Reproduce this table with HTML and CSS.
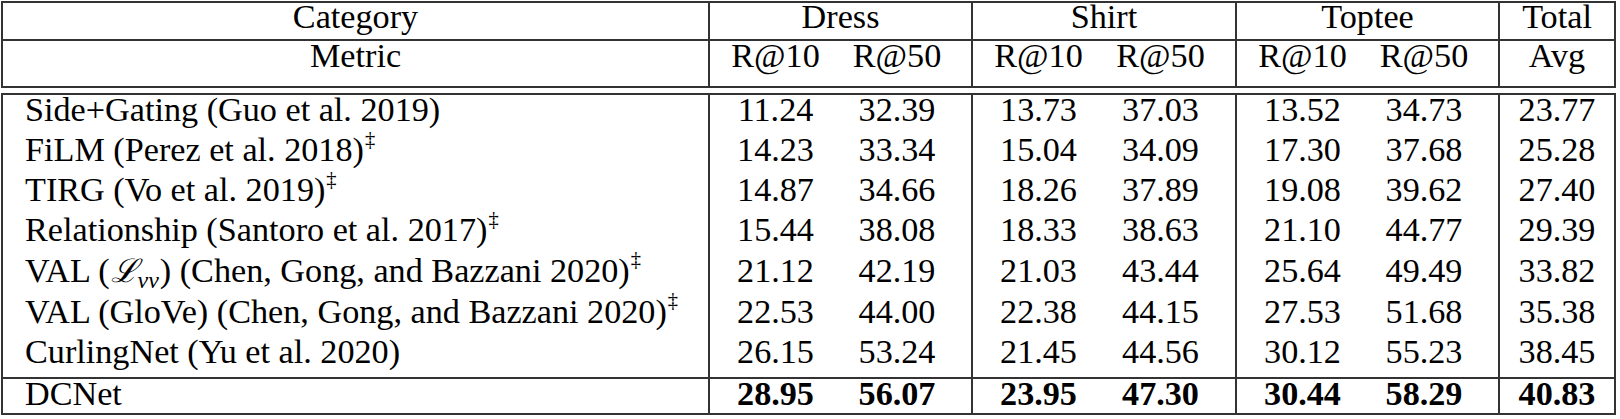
FILE: index.html
```html
<!DOCTYPE html>
<html lang="en">
<head>
<meta charset="utf-8">
<title>Results table</title>
<link rel="stylesheet" href="styles.css">
</head>
<body>
<div class="wrap">
  <table class="tbl head">
    <colgroup>
      <col class="c-name"><col class="c-a"><col class="c-b"><col class="c-a"><col class="c-c"><col class="c-a"><col class="c-b"><col class="c-tot">
    </colgroup>
    <tr class="r1">
      <td class="name ctr">Category</td>
      <td colspan="2" class="num grp">Dress</td>
      <td colspan="2" class="num grp">Shirt</td>
      <td colspan="2" class="num grp">Toptee</td>
      <td class="num">Total</td>
    </tr>
    <tr class="r2">
      <td class="name ctr">Metric</td>
      <td class="num">R@10</td><td class="num end">R@50</td>
      <td class="num">R@10</td><td class="num end">R@50</td>
      <td class="num">R@10</td><td class="num end">R@50</td>
      <td class="num">Avg</td>
    </tr>
  </table>
  <table class="tbl body">
    <colgroup>
      <col class="c-name"><col class="c-a"><col class="c-b"><col class="c-a"><col class="c-c"><col class="c-a"><col class="c-b"><col class="c-tot">
    </colgroup>
    <tr>
      <td class="name">Side+Gating (Guo et al. 2019)</td>
      <td class="num">11.24</td><td class="num end">32.39</td>
      <td class="num">13.73</td><td class="num end">37.03</td>
      <td class="num">13.52</td><td class="num end">34.73</td>
      <td class="num">23.77</td>
    </tr>
    <tr>
      <td class="name">FiLM (Perez et al. 2018)<sup class="dag">‡</sup></td>
      <td class="num">14.23</td><td class="num end">33.34</td>
      <td class="num">15.04</td><td class="num end">34.09</td>
      <td class="num">17.30</td><td class="num end">37.68</td>
      <td class="num">25.28</td>
    </tr>
    <tr>
      <td class="name">TIRG (Vo et al. 2019)<sup class="dag">‡</sup></td>
      <td class="num">14.87</td><td class="num end">34.66</td>
      <td class="num">18.26</td><td class="num end">37.89</td>
      <td class="num">19.08</td><td class="num end">39.62</td>
      <td class="num">27.40</td>
    </tr>
    <tr>
      <td class="name">Relationship (Santoro et al. 2017)<sup class="dag">‡</sup></td>
      <td class="num">15.44</td><td class="num end">38.08</td>
      <td class="num">18.33</td><td class="num end">38.63</td>
      <td class="num">21.10</td><td class="num end">44.77</td>
      <td class="num">29.39</td>
    </tr>
    <tr>
      <td class="name">VAL <span class="math">(<span class="cal">ℒ</span><sub class="sub">vv</sub>)</span> (Chen, Gong, and Bazzani 2020)<sup class="dag">‡</sup></td>
      <td class="num">21.12</td><td class="num end">42.19</td>
      <td class="num">21.03</td><td class="num end">43.44</td>
      <td class="num">25.64</td><td class="num end">49.49</td>
      <td class="num">33.82</td>
    </tr>
    <tr>
      <td class="name">VAL (GloVe) (Chen, Gong, and Bazzani 2020)<sup class="dag">‡</sup></td>
      <td class="num">22.53</td><td class="num end">44.00</td>
      <td class="num">22.38</td><td class="num end">44.15</td>
      <td class="num">27.53</td><td class="num end">51.68</td>
      <td class="num">35.38</td>
    </tr>
    <tr>
      <td class="name">CurlingNet (Yu et al. 2020)</td>
      <td class="num">26.15</td><td class="num end">53.24</td>
      <td class="num">21.45</td><td class="num end">44.56</td>
      <td class="num">30.12</td><td class="num end">55.23</td>
      <td class="num">38.45</td>
    </tr>
    <tr class="best">
      <td class="name">DCNet</td>
      <td class="num">28.95</td><td class="num end">56.07</td>
      <td class="num">23.95</td><td class="num end">47.30</td>
      <td class="num">30.44</td><td class="num end">58.29</td>
      <td class="num">40.83</td>
    </tr>
  </table>
</div>
</body>
</html>
```

FILE: styles.css
```css
html, body {
  margin: 0;
  padding: 0;
  background: #ffffff;
}

.wrap {
  padding: 1px 0 0 1px;
  display: flex;
  flex-direction: column;
  gap: 5px;
  font-family: "Liberation Serif", "Times New Roman", serif;
  font-size: 34.2px;
  color: #000;
}

.tbl {
  width: 1615px;
  table-layout: fixed;
  border-collapse: separate;
  border-spacing: 0;
  border: 2px solid #333;
}

.c-name { width: 707px; }
.c-a { width: 131px; }
.c-b { width: 132px; }
.c-c { width: 133px; }
.c-tot { width: 114px; }

.tbl td {
  box-sizing: border-box;
  padding: 0;
  white-space: nowrap;
  vertical-align: top;
}

.name {
  padding-left: 22px !important;
  text-align: left;
  border-right: 2px solid #333;
}

.name.ctr {
  text-align: center;
  padding-left: 0 !important;
}

.num {
  text-align: center;
}

.grp {
  border-right: 2px solid #333;
}

.end {
  border-right: 2px solid #333;
  padding-right: 18px !important;
}

.head .r1 td {
  line-height: 27px;
  padding-bottom: 8.5px;
  border-bottom: 2px solid #333;
}

.head .r2 td {
  line-height: 29.3px;
  padding-bottom: 16.2px;
}

.body tr td {
  line-height: 29.9px;
  padding-bottom: 10.24px;
}

.body .best td {
  border-top: 2px solid #333;
  line-height: 30.9px;
  padding-bottom: 3.1px;
  font-weight: bold;
}

.body .best td.name {
  font-weight: normal;
}

.dag {
  font-size: 0.6em;
  line-height: 0;
  vertical-align: 0.75em;
  margin-left: 1px;
}

.cal {
  font-family: "DejaVu Serif", "Liberation Serif", serif;
  font-style: italic;
  font-size: 0.95em;
  padding-left: 1px;
}

.sub {
  font-style: italic;
  font-size: 0.7em;
  line-height: 0;
  vertical-align: -0.25em;
  margin-right: 1px;
}
```
